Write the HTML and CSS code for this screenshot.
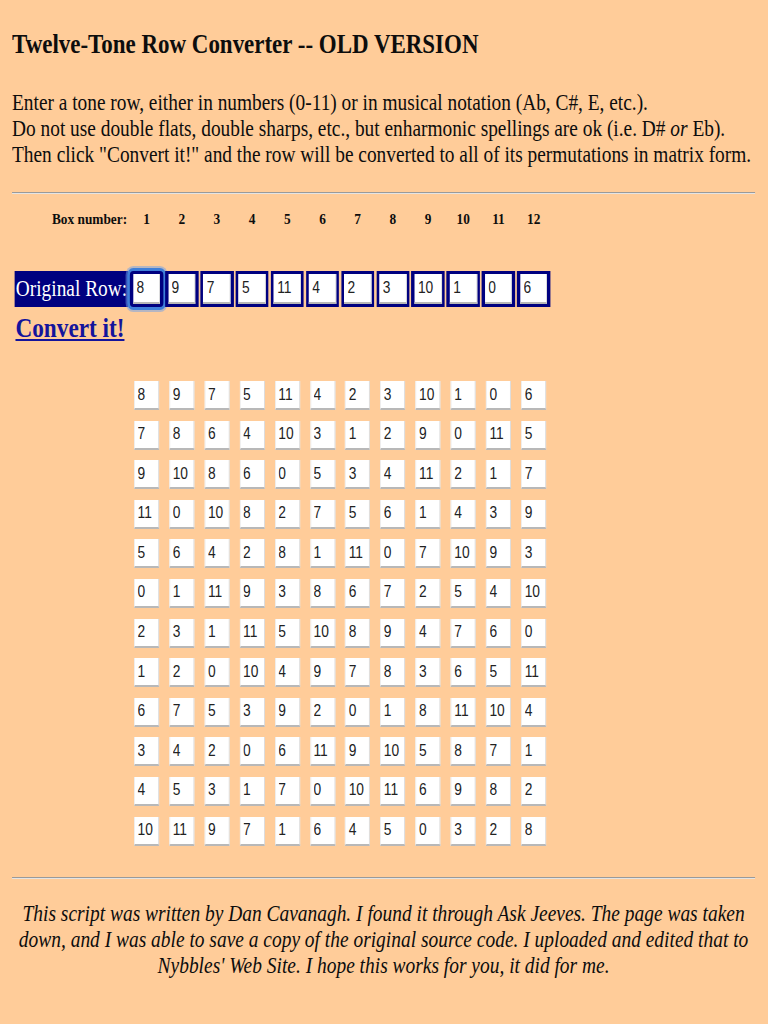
FILE: index.html
```html
<!DOCTYPE html>
<html lang="en">
<head>
<meta charset="utf-8">
<title>Twelve-Tone Row Converter</title>
<link rel="stylesheet" href="styles.css">
</head>
<body>
<div class="frame">
<div class="page">
<h1 class="title">Twelve-Tone Row Converter -- OLD VERSION</h1>

<p class="intro">Enter a tone row, either in numbers (0-11) or in musical notation (Ab, C#, E, etc.).<br>
Do not use double flats, double sharps, etc., but enharmonic spellings are ok (i.e. D# <i>or</i> Eb).<br>
Then click "Convert it!" and the row will be converted to all of its permutations in matrix form.</p>

<hr class="rule">

<form class="converter">
  <div class="board board-head">
    <span class="head-label">Box number:</span>
    <span class="num">1</span><span class="num">2</span><span class="num">3</span><span class="num">4</span>
    <span class="num">5</span><span class="num">6</span><span class="num">7</span><span class="num">8</span>
    <span class="num">9</span><span class="num">10</span><span class="num">11</span><span class="num">12</span>
  </div>

  <div class="board board-row">
    <label class="row-label">Original Row:</label>
    <span class="cell active"><input class="tone" value="8"></span>
    <span class="cell"><input class="tone" value="9"></span>
    <span class="cell"><input class="tone" value="7"></span>
    <span class="cell"><input class="tone" value="5"></span>
    <span class="cell"><input class="tone" value="11"></span>
    <span class="cell"><input class="tone" value="4"></span>
    <span class="cell"><input class="tone" value="2"></span>
    <span class="cell"><input class="tone" value="3"></span>
    <span class="cell"><input class="tone" value="10"></span>
    <span class="cell"><input class="tone" value="1"></span>
    <span class="cell"><input class="tone" value="0"></span>
    <span class="cell"><input class="tone" value="6"></span>
  </div>

  <a class="convert" href="#">Convert it!</a>

  <div class="board matrix" id="matrix"></div>
</form>

<hr class="rule rule-bottom">

<p class="credit">This script was written by Dan Cavanagh. I found it through Ask Jeeves. The page was taken down, and I was able to save a copy of the original source code. I uploaded and edited that to Nybbles' Web Site. I hope this works for you, it did for me.</p>
</div>
</div>

<script src="matrix.js"></script>
</body>
</html>
```

FILE: matrix.js
```js
// Build the 12x12 matrix: each row is the original row transposed so that
// its first note follows the inversion of the original row.
(function () {
  var row = [8, 9, 7, 5, 11, 4, 2, 3, 10, 1, 0, 6];
  var grid = document.getElementById('matrix');
  for (var r = 0; r < 12; r++) {
    var start = (2 * row[0] - row[r] + 24) % 12;
    var offset = (start - row[0] + 12) % 12;
    grid.appendChild(document.createElement('span'));
    for (var c = 0; c < 12; c++) {
      var box = document.createElement('input');
      box.className = 'tone tone-out';
      box.value = (row[c] + offset) % 12;
      grid.appendChild(box);
    }
  }
})();
```

FILE: styles.css
```css
html {
  background: #ffcc99;
  overflow-x: hidden;
}

body {
  margin: 0;
  padding: 1px 0;
  font-family: "Liberation Serif", "Times New Roman", serif;
  color: #0d0d0d;
}

.frame {
  width: 100%;
  overflow: hidden;
}

/* the page is laid out on a wide sheet and drawn narrow, like a condensed face */
.page {
  box-sizing: border-box;
  width: 892px;
  padding: 0 14px 0 14px;
  transform: scaleX(0.86);
  transform-origin: 0 0;
}

.title {
  margin: 28px 0 0;
  font-size: 26.7px;
  line-height: 30px;
  font-weight: bold;
}

.intro {
  margin: 31px 0 0;
  font-size: 22.5px;
  line-height: 26px;
}

.rule {
  margin: 24px 0 0;
  border: 0;
  border-top: 1px solid #9a9a9a;
  border-bottom: 1px solid #e4e4e4;
  height: 0;
}

.converter {
  margin: 0;
}

.board {
  display: grid;
  grid-template-columns: 131.4px repeat(12, 38.6px);
  column-gap: 2.33px;
  margin-left: 3.4px;
}

.board-head {
  margin-top: 15px;
  align-items: center;
  font-weight: bold;
  font-size: 15.5px;
  line-height: 20px;
}

.head-label {
  text-align: right;
  padding-right: 1px;
}

.num {
  text-align: center;
}

.board-row {
  margin-top: 42px;
  height: 36px;
}

.row-label {
  background: #000080;
  color: #fff;
  font-size: 22.5px;
  line-height: 36px;
  text-align: right;
  padding-right: 1px;
  white-space: nowrap;
}

.cell {
  background: #000080;
  padding: 3px 3.5px;
  display: flex;
}

.cell.active {
  border-radius: 4px;
  box-shadow: 0 0 0 3px #3f7fd9, 0 0 0 5px rgba(110, 160, 235, 0.5);
}

.tone {
  box-sizing: border-box;
  width: 100%;
  height: 100%;
  margin: 0;
  padding: 0 0 0 4px;
  border: 0;
  border-right: 1px solid #d8d8d8;
  border-bottom: 2px solid #b8b8b8;
  background: #fff;
  font-family: "Liberation Sans", Arial, sans-serif;
  font-size: 16px;
  color: #222;
  outline: none;
}

.convert {
  display: inline-block;
  margin: 7px 0 0 4px;
  font-size: 27px;
  line-height: 28px;
  font-weight: bold;
  color: #14149c;
}

.matrix {
  margin-top: 39px;
  row-gap: 10.6px;
  justify-items: center;
}

.tone-out {
  width: 29px;
  height: 29px;
  padding-left: 3px;
  border-left: 1px solid #ececec;
}

.rule-bottom {
  margin-top: 31px;
}

.credit {
  margin: 22px 0 0;
  text-align: center;
  font-style: italic;
  font-size: 22.6px;
  line-height: 26px;
}
```
